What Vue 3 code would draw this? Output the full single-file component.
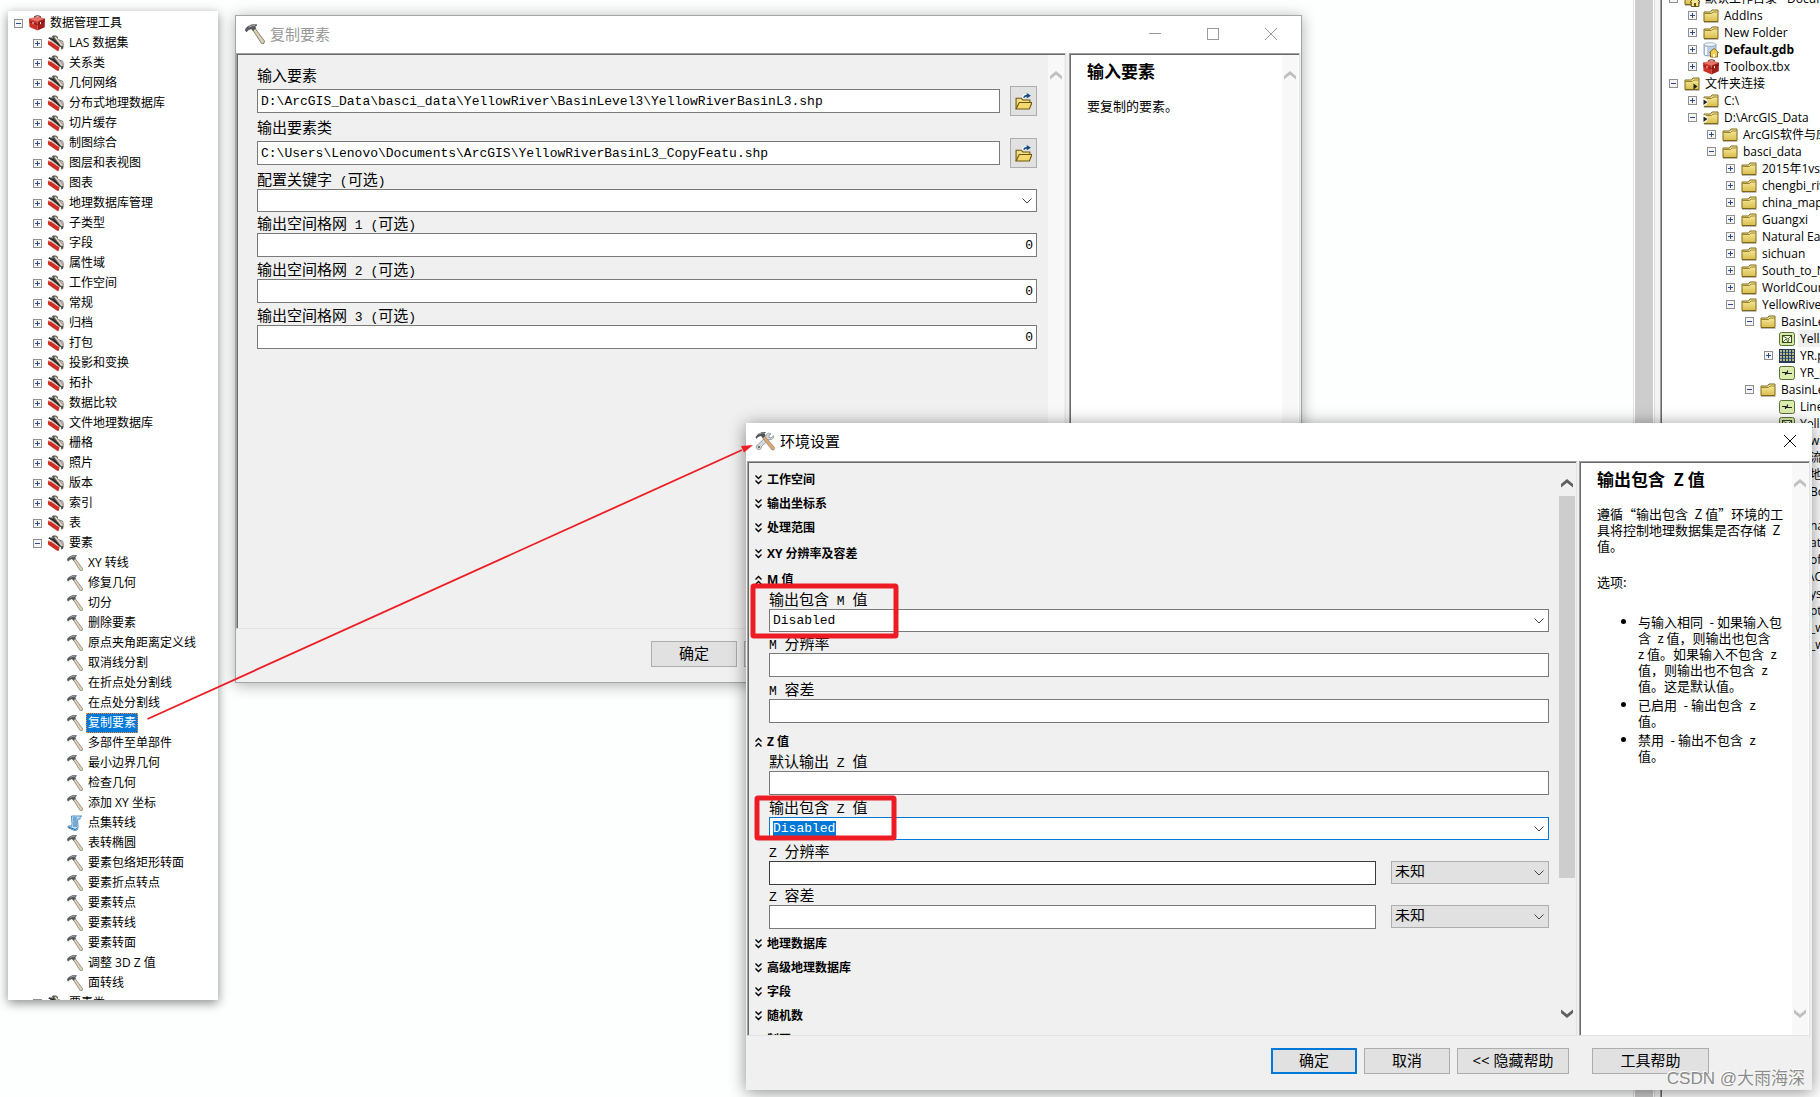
<script setup>
import { ref } from 'vue'

const toolNames = [
  'LAS 数据集', '关系类', '几何网络', '分布式地理数据库', '切片缓存', '制图综合', '图层和表视图', '图表',
  '地理数据库管理', '子类型', '字段', '属性域', '工作空间', '常规', '归档', '打包', '投影和变换', '拓扑',
  '数据比较', '文件地理数据库', '栅格', '照片', '版本', '索引', '表',
]
const featureTools = [
  'XY 转线', '修复几何', '切分', '删除要素', '原点夹角距离定义线', '取消线分割', '在折点处分割线', '在点处分割线',
  '复制要素', '多部件至单部件', '最小边界几何', '检查几何', '添加 XY 坐标', '点集转线', '表转椭圆',
  '要素包络矩形转面', '要素折点转点', '要素转点', '要素转线', '要素转面', '调整 3D Z 值', '面转线',
]
const toolRows = [
  { level: 0, sign: '-', icon: 'toolbox', text: '数据管理工具' },
  ...toolNames.map((text) => ({ level: 1, sign: '+', icon: 'toolset', text })),
  { level: 1, sign: '-', icon: 'toolset', text: '要素' },
  ...featureTools.map((text) => ({
    level: 2, sign: '', text,
    icon: text === '点集转线' ? 'script' : 'hammer',
    selected: text === '复制要素',
  })),
  { level: 1, sign: '+', icon: 'toolset', text: '要素类' },
]

const catalogRows = [
  { level: 0, sign: '-', icon: 'home', text: '默认工作目录 - Documents' },
  { level: 1, sign: '+', icon: 'folder', text: 'AddIns' },
  { level: 1, sign: '+', icon: 'folder', text: 'New Folder' },
  { level: 1, sign: '+', icon: 'gdb', text: 'Default.gdb', bold: true },
  { level: 1, sign: '+', icon: 'toolbox', text: 'Toolbox.tbx' },
  { level: 0, sign: '-', icon: 'link', text: '文件夹连接' },
  { level: 1, sign: '+', icon: 'shortcut', text: 'C:\\' },
  { level: 1, sign: '-', icon: 'shortcut', text: 'D:\\ArcGIS_Data' },
  { level: 2, sign: '+', icon: 'folder', text: 'ArcGIS软件与应用' },
  { level: 2, sign: '-', icon: 'folder', text: 'basci_data' },
  { level: 3, sign: '+', icon: 'folder', text: '2015年1vs' },
  { level: 3, sign: '+', icon: 'folder', text: 'chengbi_river' },
  { level: 3, sign: '+', icon: 'folder', text: 'china_map' },
  { level: 3, sign: '+', icon: 'folder', text: 'Guangxi' },
  { level: 3, sign: '+', icon: 'folder', text: 'Natural Earth' },
  { level: 3, sign: '+', icon: 'folder', text: 'sichuan' },
  { level: 3, sign: '+', icon: 'folder', text: 'South_to_North' },
  { level: 3, sign: '+', icon: 'folder', text: 'WorldCountry' },
  { level: 3, sign: '-', icon: 'folder', text: 'YellowRiver' },
  { level: 4, sign: '-', icon: 'folder', text: 'BasinLevel' },
  { level: 5, sign: '', icon: 'polygon', text: 'Yellow', hover: true },
  { level: 5, sign: '+', icon: 'raster', text: 'YR.png' },
  { level: 5, sign: '', icon: 'line', text: 'YR_line' },
  { level: 4, sign: '-', icon: 'folder', text: 'BasinLevel' },
  { level: 5, sign: '', icon: 'line', text: 'Line' },
  { level: 5, sign: '', icon: 'polygon', text: 'Yellow' },
  ...['wl', '流域', '地', 'Bo', '', 'na', 'at', 'of_', '\\C', 'ys', 'pt', '_w', '_w']
    .map((text) => ({ level: 5, tail: true, text })),
]

// Splits a caption so that Latin runs can use the narrower half-width face.
const runs = (text) =>
  text.split(/([\x20-\x7e]+)/).filter(Boolean).map((t) => ({ t, latin: /^[\x20-\x7e]+$/.test(t) }))

const inputFeatures = ref('D:\\ArcGIS_Data\\basci_data\\YellowRiver\\BasinLevel3\\YellowRiverBasinL3.shp')
const outputFeatures = ref('C:\\Users\\Lenovo\\Documents\\ArcGIS\\YellowRiverBasinL3_CopyFeatu.shp')
const copyFields = [
  { id: 'in', kind: 'file', label: '输入要素', model: inputFeatures },
  { id: 'out', kind: 'file', label: '输出要素类', model: outputFeatures },
  { id: 'kw', kind: 'select', label: '配置关键字 (可选)', options: [''] },
  { id: 'g1', kind: 'number', label: '输出空间格网 1 (可选)', value: '0' },
  { id: 'g2', kind: 'number', label: '输出空间格网 2 (可选)', value: '0' },
  { id: 'g3', kind: 'number', label: '输出空间格网 3 (可选)', value: '0' },
]

const sections = [
  { title: '工作空间' },
  { title: '输出坐标系' },
  { title: '处理范围' },
  { title: 'XY 分辨率及容差', latin: true },
  {
    title: 'M 值', latin: true, open: true,
    fields: [
      { id: 'm', kind: 'select', label: '输出包含 M 值', options: ['Disabled', 'Enabled'] },
      { id: 'mres', kind: 'number', label: 'M 分辨率', value: '' },
      { id: 'mtol', kind: 'number', label: 'M 容差', value: '' },
    ],
  },
  {
    title: 'Z 值', latin: true, open: true,
    fields: [
      { id: 'zdef', kind: 'number', label: '默认输出 Z 值', value: '' },
      { id: 'z', kind: 'select', label: '输出包含 Z 值', options: ['Disabled', 'Enabled'], active: true },
      { id: 'zres', kind: 'unit', label: 'Z 分辨率', value: '', dark: true },
      { id: 'ztol', kind: 'unit', label: 'Z 容差', value: '' },
    ],
  },
  { title: '地理数据库' },
  { title: '高级地理数据库' },
  { title: '字段' },
  { title: '随机数' },
  { title: '制图' },
]
const trees = [
  { name: 'tools', rows: toolRows },
  { name: 'catalog', rows: catalogRows },
]
</script>

<template>
  <div class="desktop" lang="zh-CN">
    <svg class="defs" width="0" height="0" aria-hidden="true">
      <defs>
        <linearGradient id="gold" x1="0" y1="0" x2="0" y2="1">
          <stop offset="0" stop-color="#fbf0a8" /><stop offset="1" stop-color="#d9bd4c" />
        </linearGradient>
        <symbol id="i-toolbox" viewBox="0 0 16 16">
          <path d="M5.500 3V1.500l3-.8 3 .8V3" fill="none" stroke="#4a1714" stroke-width="1" />
          <path d="M0 3.500L9 1.500l7 2-7 3.300z" fill="#e27468" />
          <path d="M0 3.500l8.500 3V15.500L.5 12z" fill="#cf3026" />
          <path d="M8.500 6.500L16 3.500l-.3 8.700-7.200 3.300z" fill="#a11d17" />
          <path d="M.3 6.800l8.200 2.700L15.700 6" fill="none" stroke="#6d120d" stroke-width=".8" />
          <path d="M4 7v2.200M11.500 7v2.200" stroke="#f1e4df" stroke-width="1" />
        </symbol>
        <symbol id="i-toolset" viewBox="0 0 16 16">
          <path d="M0 3l3-.5L5 .5h3l2 1.500v2l5 2 1 5-2 2z" fill="#515151" />
          <path d="M9.500 4.500L15 6.500l1 4v1.500l-3-2z" fill="#b5b5b5" />
          <path d="M1 3l3.500 1 8 7.500" stroke="#262626" stroke-width="1.500" fill="none" />
          <path d="M2 2.500l3 .5" stroke="#c9c9c9" stroke-width=".8" />
          <path d="M6 2l2-.5 7 8.500-1.800 1.500z" fill="#ded6c3" stroke="#77736a" stroke-width=".4" />
          <path d="M0 6l3 .8 8.500 5.400-.7 3.500H9L0 9.500z" fill="#c92d23" />
          <path d="M0 5.700l3 .6 8.500 5.700" fill="none" stroke="#ef9286" stroke-width=".9" />
          <path d="M13 11.500l2.500.3-.5 2-1.800.8z" fill="#4c4c4c" />
        </symbol>
        <symbol id="i-hammer" viewBox="0 0 16 16">
          <path d="M6 4.500l1.800-1.300 7.700 10.300-.3 2-1.800.3z" fill="#ddd0b8" stroke="#7b7466" stroke-width=".7" />
          <path d="M0 4.500L2 2.200 5.500.5h4L9 1.600 7.800 2l.8 1.400-2.200 1.800-1.500-1.400L2.500 4.800 1.200 6.300z" fill="#555a5c" stroke="#333" stroke-width=".4" />
          <path d="M3 2.500l3-1.200h2" fill="none" stroke="#b4babc" stroke-width=".7" />
        </symbol>
        <symbol id="i-script" viewBox="0 0 16 16">
          <path d="M4.500 1h10.200c-1.600.2-1.800 1.500-1.500 3l-2.500.2c-.5 3.500 1.300 7-.2 10.300-.8 1.200-2 1.200-3 1L1.500 13c-.8-.7-.7-1.800.3-2.300l2.700.6C6 8 3.800 4 4.500 1z" fill="#c5e2f8" stroke="#3f86bd" stroke-width=".9" />
          <path d="M5.800 3h4M5.800 5h4M6.200 7h4M6.200 9h4M6 11h4" stroke="#2968a5" stroke-width="1" />
          <path d="M1.500 12l6.500 2.500 2-1" stroke="#1f66a3" fill="none" />
        </symbol>
        <symbol id="i-folder" viewBox="0 0 16 16">
          <path d="M1 4h6.500L9 2h6v11.500H1z" fill="url(#gold)" stroke="#7d6716" />
          <path d="M1.500 5.500h7L10 4h4.500" stroke="#8f7923" fill="none" stroke-width=".9" />
          <path d="M1 14.500h14.500" stroke="#aaa" stroke-width=".8" />
        </symbol>
        <symbol id="i-home" viewBox="0 0 16 16">
          <use href="#i-folder" />
          <path d="M6 11l5-5 5 5h-1.200v4.500H7.200V11z" fill="#f3e394" stroke="#665310" />
          <path d="M10 15v-3h2v3z" fill="#665310" />
        </symbol>
        <symbol id="i-link" viewBox="0 0 16 16">
          <use href="#i-folder" />
          <path d="M9.500 7.500v6l4-3z" fill="#222" />
        </symbol>
        <symbol id="i-shortcut" viewBox="0 0 16 16">
          <use href="#i-folder" />
          <path d="M0 5l3 .5 2 3.500-2 3-3 1.500z" fill="#fff" />
          <path d="M.5 6.500l4 2.500-4 3z" fill="#222" />
        </symbol>
        <symbol id="i-gdb" viewBox="0 0 16 16">
          <path d="M1 2.500v10c1 2 10 2 12 0v-10z" fill="#bccfe2" stroke="#71879c" stroke-width=".7" />
          <ellipse cx="7" cy="2.500" rx="6" ry="1.800" fill="#f0f6fb" stroke="#8096aa" stroke-width=".7" />
          <path d="M3 5v8" stroke="#f5faff" stroke-width="2" />
          <path d="M6.500 10.500l4.500-4 4.500 4h-1v4.500H7.500v-4.500z" fill="#efcf5a" stroke="#7c6210" stroke-width=".9" />
          <path d="M10 15v-3h2v3z" fill="#fff4b8" />
        </symbol>
        <symbol id="i-polygon" viewBox="0 0 16 16">
          <rect x=".5" y="1.500" width="15" height="13" rx="2" fill="#d7e7a4" stroke="#567236" />
          <rect x="3.500" y="4.500" width="9" height="7" fill="#f0f6d8" stroke="#34481f" />
          <path d="M4 5l5 3 3-3M4 11l3-3 2 3 1-3" fill="none" stroke="#34481f" stroke-width=".8" />
        </symbol>
        <symbol id="i-line" viewBox="0 0 16 16">
          <rect x=".5" y="1.500" width="15" height="13" rx="2" fill="#dcebae" stroke="#567236" />
          <path d="M3 7.500h5.500M8.500 5.500v2M6.500 7.500v2.500M6.500 8.500H13" fill="none" stroke="#222" stroke-width="1.200" />
        </symbol>
        <symbol id="i-raster" viewBox="0 0 16 16">
          <rect y="1" width="16" height="14" fill="#253c63" />
          <path d="M1 3h15M1 6h15M1 9h15M1 12h15" stroke="#f0e37a" stroke-width="1.600" stroke-dasharray="2 1" />
          <path d="M1 4h15M1 10h15" stroke="#7ea3d3" stroke-width=".7" stroke-dasharray="2 1" />
        </symbol>
        <symbol id="i-browse" viewBox="0 0 16 16">
          <path d="M1 15V5h5l1.500 1.500H14V9" fill="#f1dd83" stroke="#6d5608" />
          <path d="M1 15l3-6h12l-2.500 6z" fill="#f3d970" stroke="#6d5608" />
          <path d="M8 5c0-2 1.500-3 4-3" fill="none" stroke="#fff" stroke-width="3" />
          <path d="M8.500 4.500c0-1.500 1.500-2 4-2" fill="none" stroke="#0d4a86" stroke-width="1.500" />
          <path d="M11 0l4 2.500L11 5z" fill="#0d4a86" />
        </symbol>
        <symbol id="i-env" viewBox="0 0 20 20">
          <path d="M15 2.500c-2-1-4.500.7-4 3.200L3 13.500c-1.500.5-2 2-1.500 3.500.8 2 4 2.200 4.800 0 .2-.7.2-1 .2-1.500L14 8.500c2.500.7 5-1 4.500-3.800L16 7l-2-.7V4.500l2-1.500z" fill="#d5d8da" stroke="#85898c" stroke-width=".8" />
          <circle cx="4" cy="16" r="1.100" fill="#555" />
          <path d="M7 6l2-1.500 10.500 12-.5 2.200-2 .3z" fill="#d9a878" stroke="#8d6d4e" stroke-width=".6" />
          <path d="M.5 6L3 3 7 1h4L9.500 2.500l1 2L8 7 6 5 3 6 1.500 8z" fill="#4f5355" />
          <path d="M3.500 3.300L7 2h2" stroke="#aaa" fill="none" stroke-width=".8" />
        </symbol>
        <symbol id="i-up" viewBox="0 0 12 10">
          <path d="M0 8.500V5l6-5 6 5v3.500L6 3.800z" fill="currentColor" />
        </symbol>
      </defs>
    </svg>

    <div v-for="tree in trees" :key="tree.name" :class="['tree-pane', tree.name]">
      <ul class="tree">
        <li
          v-for="(row, i) in tree.rows"
          :key="i"
          :class="['row', 'level-' + row.level, { selected: row.selected, bold: row.bold, hover: row.hover, tail: row.tail }]"
        >
          <span :class="['sign', { box: row.sign }]">
            <svg v-if="row.sign" width="9" height="9" viewBox="0 0 9 9">
              <path :d="row.sign === '+' ? 'M2 4.500h5M4.500 2v5' : 'M2 4.500h5'" stroke="#2c4a8c" fill="none" />
            </svg>
          </span>
          <svg class="icon" width="16" height="16"><use v-if="row.icon" :href="'#i-' + row.icon" /></svg>
          <span class="name">{{ row.text }}</span>
        </li>
      </ul>
    </div>

    <section class="window copy" aria-label="复制要素">
      <header class="titlebar">
        <svg width="20" height="20"><use href="#i-hammer" /></svg>
        <h1>复制要素</h1>
        <button class="sys" type="button" aria-label="最小化">
          <svg width="12" height="12"><path d="M0 5.500h12" /></svg>
        </button>
        <button class="sys" type="button" aria-label="最大化">
          <svg width="12" height="12"><rect x=".5" y=".5" width="11" height="11" /></svg>
        </button>
        <button class="sys" type="button" aria-label="关闭">
          <svg width="12" height="12"><path d="M0 0l12 12M12 0L0 12" /></svg>
        </button>
      </header>
      <div class="body">
        <div class="pane form-pane">
          <form class="fields" @submit.prevent>
            <div v-for="f in copyFields" :key="f.id" :class="['field', f.kind]">
              <label :for="f.id"><span v-for="(r, i) in runs(f.label)" :key="i" :class="{ latin: r.latin }">{{ r.t }}</span></label>
              <div v-if="f.kind === 'file'" class="line">
                <input :id="f.id" v-model="f.model.value" type="text" />
                <button class="browse" type="button" :aria-label="'浏览' + f.label">
                  <svg width="17" height="17"><use href="#i-browse" /></svg>
                </button>
              </div>
              <div v-else-if="f.kind === 'select'" class="combo">
                <select :id="f.id"><option v-for="o in f.options" :key="o">{{ o }}</option></select>
                <svg class="chev" width="10" height="6"><path d="M.5.5L5 5l4.500-4.500" /></svg>
              </div>
              <input v-else :id="f.id" class="right" type="text" :value="f.value" />
            </div>
          </form>
          <div class="scroll off"><svg width="12" height="10"><use href="#i-up" /></svg></div>
        </div>
        <aside class="pane help">
          <div class="help-text">
            <h2>输入要素</h2>
            <p>要复制的要素。</p>
          </div>
          <div class="scroll off"><svg width="12" height="10"><use href="#i-up" /></svg></div>
        </aside>
      </div>
      <footer class="actions">
        <button type="button">确定</button>
        <button type="button">取消</button>
      </footer>
    </section>

    <section class="window env" aria-label="环境设置">
      <header class="titlebar">
        <svg width="20" height="20"><use href="#i-env" /></svg>
        <h1>环境设置</h1>
        <button class="sys" type="button" aria-label="关闭">
          <svg width="12" height="12"><path d="M0 0l12 12M12 0L0 12" /></svg>
        </button>
      </header>
      <div class="body">
        <div class="pane form-pane">
          <form class="sections" @submit.prevent>
            <div v-for="s in sections" :key="s.title" class="section">
              <h3 :class="{ shifted: s.latin }">
                <svg :class="{ flip: s.open }" width="7" height="10"><path d="M.5.500L3.500 3.500l3-3M.5 5.500l3 3 3-3" /></svg>
                {{ s.title }}
              </h3>
              <div v-if="s.fields" class="group">
                <div v-for="f in s.fields" :key="f.id" :class="['field', f.kind]">
                  <label :for="f.id"><span v-for="(r, i) in runs(f.label)" :key="i" :class="{ latin: r.latin }">{{ r.t }}</span></label>
                  <div v-if="f.kind === 'select'" :class="['combo', { active: f.active }]">
                    <select :id="f.id"><option v-for="o in f.options" :key="o">{{ o }}</option></select>
                    <svg class="chev" width="10" height="6"><path d="M.5.5L5 5l4.500-4.500" /></svg>
                  </div>
                  <div v-else-if="f.kind === 'unit'" class="line">
                    <input :id="f.id" type="text" :class="{ dark: f.dark }" :value="f.value" />
                    <div class="combo grey">
                      <select :aria-label="f.label + '单位'"><option>未知</option></select>
                      <svg class="chev" width="10" height="6"><path d="M.5.5L5 5l4.500-4.500" /></svg>
                    </div>
                  </div>
                  <input v-else :id="f.id" type="text" :value="f.value" />
                </div>
              </div>
            </div>
          </form>
          <div class="scroll on">
            <svg width="12" height="10"><use href="#i-up" /></svg>
            <div class="track"><div class="thumb"></div></div>
            <svg class="flip" width="12" height="10"><use href="#i-up" /></svg>
          </div>
        </div>
        <aside class="pane help">
          <div class="help-text">
            <h2>输出包含&ensp;Z 值</h2>
            <p>遵循“输出包含&ensp;Z 值”环境的工<br />具将控制地理数据集是否存储&ensp;Z<br />值。</p>
            <p>选项:</p>
            <ul>
              <li>与输入相同&ensp;- 如果输入包<br />含&ensp;z 值，则输出也包含<br />z 值。如果输入不包含&ensp;z<br />值，则输出也不包含&ensp;z<br />值。这是默认值。</li>
              <li>已启用&ensp;- 输出包含&ensp;z<br />值。</li>
              <li>禁用&ensp;- 输出不包含&ensp;z<br />值。</li>
            </ul>
          </div>
          <div class="scroll off">
            <svg width="12" height="10"><use href="#i-up" /></svg>
            <div class="track"></div>
            <svg class="flip" width="12" height="10"><use href="#i-up" /></svg>
          </div>
        </aside>
      </div>
      <footer class="actions">
        <button class="primary" type="button">确定</button>
        <button type="button">取消</button>
        <button class="wide" type="button">&lt;&lt; 隐藏帮助</button>
        <button class="tool-help" type="button">工具帮助</button>
      </footer>
    </section>

    <svg class="marks" width="910" height="850" viewBox="0 0 910 850" aria-hidden="true">
      <path d="M147.500 719L742 450" stroke="#ed1c24" stroke-width="1.800" />
      <path d="M753 445l-9 7.500-3-6.500z" fill="#ed1c24" />
      <rect x="753" y="586" width="143" height="50" rx="1" fill="none" stroke="#ed1c24" stroke-width="5" />
      <rect x="757" y="798" width="137" height="40" rx="1" fill="none" stroke="#ed1c24" stroke-width="5" />
    </svg>
    <div class="watermark">CSDN @大雨海深</div>
  </div>
</template>

<style>
html,
body {
  margin: 0;
  background: #fdfefe;
}
</style>

<style scoped>
.desktop {
  position: relative;
  height: 100vh;
  overflow: hidden;
  background: #fdfefe;
  color: #000;
  font: 12px/16px "Open Sans", "Noto Sans CJK SC", sans-serif;
}
* {
  box-sizing: border-box;
}
.defs {
  position: absolute;
}
h1, h2, h3, p, ul {
  margin: 0;
  padding: 0;
}
button, input, select {
  margin: 0;
  color: inherit;
  border-radius: 0;
}

/* trees */
.tree-pane {
  position: absolute;
  overflow: hidden;
  background: #fff;
}
.tools {
  left: 8px;
  top: 11px;
  bottom: 97px;
  width: 210px;
  padding-top: 2px;
  --row: 20px;
  box-shadow: 0 3px 10px rgba(0, 0, 0, 0.45);
}
.catalog {
  right: 0;
  top: 0;
  bottom: 0;
  width: 187px;
  display: flex;
  --row: 17px;
}
.catalog::before {
  content: "";
  flex: none;
  width: 30px;
  background: linear-gradient(90deg, #e3e3e3 1px, #fff 1px 2px, #cdcdcd 2px 20px, #fff 20px 21px, #dcdcdc 21px 22px, #f3f3f3 22px 27px, #a0a0a0 27px 28px, #696969 28px 29px, #fff 29px);
}
.catalog .tree {
  flex: none;
  margin-top: -10px;
}
.tree {
  list-style: none;
}
.row {
  display: flex;
  align-items: center;
  height: var(--row);
  padding-left: 6px;
  white-space: nowrap;
}
.level-1 { padding-left: 25px; }
.level-2 { padding-left: 44px; }
.level-3 { padding-left: 63px; }
.level-4 { padding-left: 82px; }
.level-5 { padding-left: 101px; }
.tail { padding-left: 111px; }
.sign {
  display: flex;
  flex: none;
  width: 9px;
  height: 9px;
}
.sign.box {
  background: #f4f4f4;
  box-shadow: inset 0 0 0 1px #8f8f8f;
}
.icon {
  flex: none;
  margin: 0 3px 0 6px;
}
.name {
  height: var(--row);
  padding: 0 2px;
  line-height: var(--row);
}
.bold .name {
  font-weight: 700;
}
.hover .name {
  background: #f0f0f0;
}
.selected .name {
  padding: 0 1px;
  border: 1px dotted #ff8728;
  background: #0078d7;
  color: #fff;
  line-height: 18px;
}

/* windows */
.window {
  position: absolute;
  display: flex;
  flex-direction: column;
  background: #f0f0f0;
}
.copy {
  left: 235px;
  right: 518px;
  top: 15px;
  bottom: 414px;
  border: 1px solid #a5a5a5;
  box-shadow: 0 2px 14px rgba(0, 0, 0, 0.32);
}
.env {
  left: 746px;
  right: 8px;
  top: 423px;
  bottom: 7px;
  box-shadow: 0 2px 16px rgba(0, 0, 0, 0.45);
}
.titlebar {
  display: flex;
  flex: none;
  align-items: center;
  height: 38px;
  padding: 0 0 2px 9px;
  background: #fff;
}
.copy .titlebar {
  height: 37px;
  padding-right: 1px;
  color: #999;
}
.titlebar h1 {
  flex: 1;
  padding-left: 5px;
  font-size: 15px;
  font-weight: 400;
}
.sys {
  display: flex;
  align-items: center;
  justify-content: center;
  width: 58px;
  height: 30px;
  padding: 0;
  border: 0;
  background: none;
}
.env .sys {
  width: 44px;
}
.sys svg {
  fill: none;
  stroke: currentColor;
}
.body {
  display: flex;
  flex: 1;
  min-height: 0;
  gap: 2px;
  padding: 0 2px 0 1px;
}
.copy .body {
  gap: 3px;
  padding: 0 1px 0 0;
}
.pane {
  display: flex;
  overflow: hidden;
  border: 1px solid;
  border-color: #a0a0a0 #e3e3e3 #e3e3e3 #a0a0a0;
  box-shadow: inset 1px 1px #696969;
}
.form-pane {
  flex: 1;
}
.help {
  flex: none;
  width: 231px;
  background: #fff;
}
.scroll {
  display: flex;
  flex: none;
  flex-direction: column;
  align-items: center;
  width: 16px;
  margin: 1px 1px 0 0;
  padding: 16px 0 17px;
}
.scroll.off {
  background: #f8f8f8;
  color: #bfbfbf;
}
.scroll.on {
  color: #606060;
}
.scroll svg {
  flex: none;
}
.track {
  flex: 1;
  align-self: stretch;
  margin: 7px 0 9px;
}
.thumb {
  height: 76%;
  background: #cdcdcd;
}
.flip {
  transform: scaleY(-1);
}
.actions {
  display: flex;
  flex: none;
  gap: 7px;
  padding: 12px 0;
}
.copy .actions {
  height: 53px;
  padding-left: 415px;
}
.env .actions {
  height: 54px;
  justify-content: flex-end;
  padding-right: 103px;
}
.actions button {
  flex: none;
  width: 86px;
  height: 26px;
  padding: 0 0 2px;
  border: 1px solid #adadad;
  background: #e1e1e1;
  font: 15px/20px "Open Sans", "Noto Sans CJK SC", sans-serif;
}
.actions .primary {
  border: 2px solid #0078d7;
}
.actions .wide {
  width: 112px;
}
.actions .tool-help {
  width: 117px;
  margin-left: 16px;
}

/* form fields */
.fields {
  flex: 1;
  padding: 14px 11px 0 20px;
}
.field {
  margin-bottom: 4px;
}
.field.number {
  margin-bottom: 5px;
}
.field.unit {
  margin-bottom: 3px;
}
.field.number:last-child {
  margin-bottom: 3px;
}
.field.unit:last-child {
  margin-bottom: 1px;
}
.field label {
  display: block;
  height: 16px;
  margin-bottom: 1px;
  font-size: 15px;
  line-height: 14px;
  white-space: pre;
}
.file label {
  margin-bottom: 2px;
}
.latin {
  font-family: "Liberation Mono", monospace;
  font-size: 13px;
}
.field input,
.field select {
  display: block;
  width: 100%;
  height: 24px;
  padding: 0 3px;
  border: 1px solid #7a7a7a;
  background: #fff;
  font: 13px/16px "Liberation Mono", "Noto Sans CJK SC", monospace;
}
.field select {
  height: 23px;
  appearance: none;
}
.field .dark {
  border-color: #3c3c3c;
}
.field .right {
  text-align: right;
}
.line {
  display: flex;
  align-items: center;
}
.line input {
  flex: 1;
  min-width: 0;
}
.browse {
  display: flex;
  align-items: center;
  justify-content: center;
  width: 27px;
  height: 30px;
  margin-left: 10px;
  padding: 0;
  border: 1px solid #adadad;
  background: #e1e1e1;
}
.combo {
  position: relative;
}
.chev {
  position: absolute;
  top: 9px;
  right: 5px;
  fill: none;
  stroke: #444;
  pointer-events: none;
}
.active select {
  border-color: #0078d7;
  background: linear-gradient(#0078d7, #0078d7) 3px center / 63px 16px no-repeat #fff;
  color: #fff;
}
.grey {
  width: 158px;
  margin-left: 15px;
}
.unit .line {
  align-items: flex-start;
}
.field .grey select {
  border-color: #adadad;
  background: #e1e1e1;
  font-size: 15px;
}

/* environment sections */
.sections {
  flex: 1;
  padding: 6px 10px 0 7px;
}
.section h3 {
  display: flex;
  align-items: center;
  gap: 5px;
  height: 24px;
  font-size: 12px;
  font-weight: 700;
}
.section .shifted {
  margin-top: 2px;
}
.section h3 svg {
  fill: none;
  stroke: #000;
  stroke-width: 1.4;
}
.group {
  margin-left: 14px;
  padding-bottom: 2px;
}

/* help */
.help-text {
  flex: 1;
  padding: 8px 0 0 17px;
  font-family: "Noto Sans CJK SC", sans-serif;
  font-size: 13px;
  white-space: nowrap;
}
.help h2 {
  margin-bottom: 18px;
  font-size: 17px;
  line-height: 18px;
}
.help p {
  margin-bottom: 20px;
}
.help ul {
  padding: 4px 0 0 41px;
}
.help li {
  margin-bottom: 3px;
}

/* overlays */
.marks {
  position: absolute;
  left: 0;
  top: 0;
  pointer-events: none;
}
.watermark {
  position: absolute;
  right: 15px;
  bottom: 6px;
  color: #8c8c8c;
  font: 17px/24px "Liberation Sans", "Noto Sans CJK SC", sans-serif;
  text-shadow: -1px -1px #fff;
}
</style>
